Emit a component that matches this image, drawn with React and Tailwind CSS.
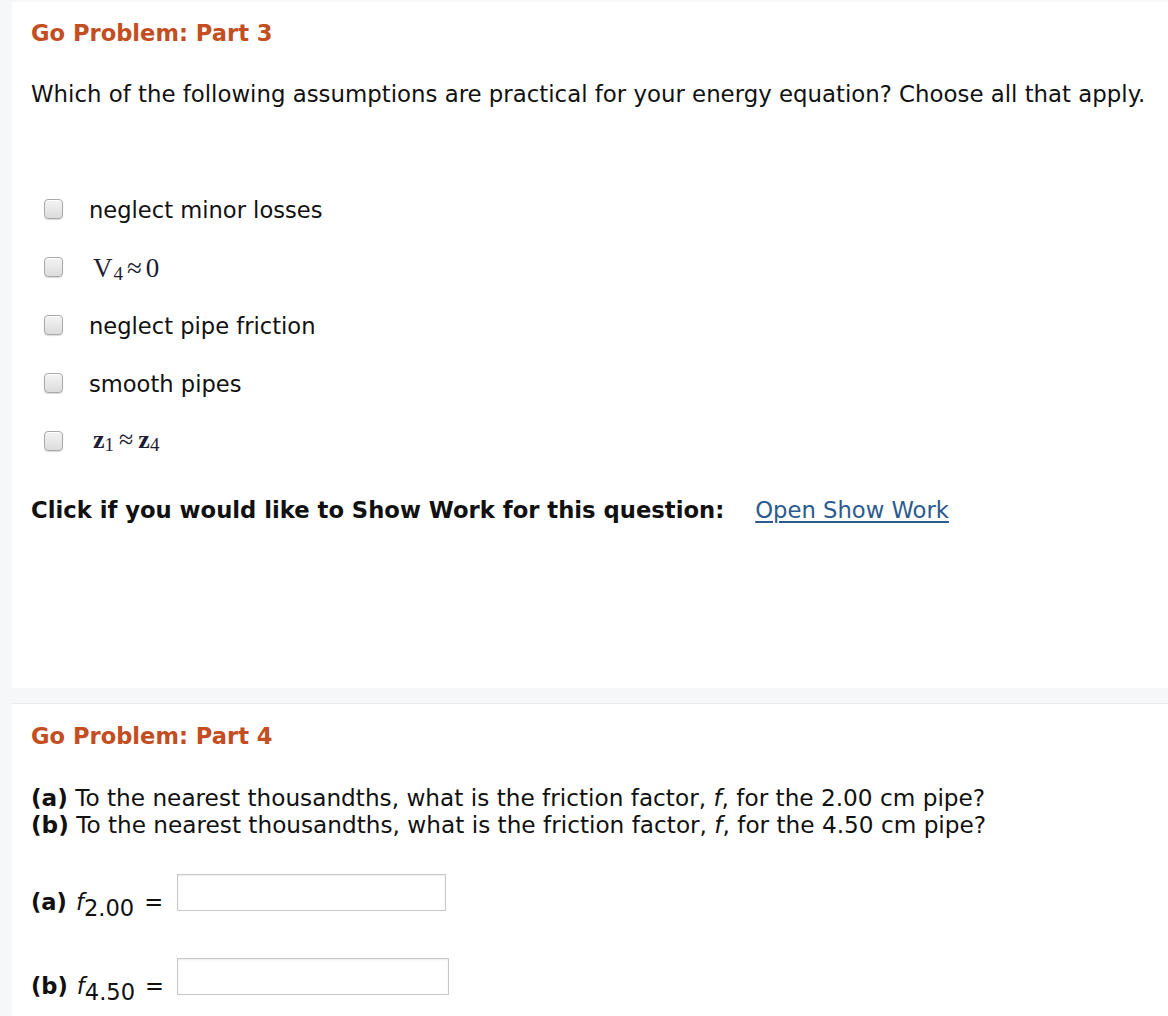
import React from "react";

function Box() {
  return (
    <span className="inline-block w-[19px] h-[20px] rounded-[4px] border border-[#a9a9a9] bg-gradient-to-b from-[#f4f4f4] to-[#dcdcdc] shadow-[inset_0_1px_0_#fff,0_1px_1px_rgba(0,0,0,0.15)]" />
  );
}

function Row({ children }) {
  return (
    <div className="flex items-center h-[58px]">
      <div className="w-[58px] pl-[13px] flex items-center">
        <Box />
      </div>
      <div className="flex items-center pt-[3px]">{children}</div>
    </div>
  );
}

const serif = { fontFamily: '"Liberation Serif", "Times New Roman", serif' };

export default function App() {
  const sans = { fontFamily: '"DejaVu Sans", Verdana, sans-serif' };
  return (
    <div className="min-h-[1016px] bg-[#f6f7f9] pl-3 pt-[2px] text-[#111]" style={sans}>
      <div className="bg-white h-[686px] pl-[19px] pt-[19px]">
        <div className="text-[22.6px] leading-[24px] font-bold text-[#c34e22]">Go Problem: Part 3</div>
        <div className="mt-[37px] text-[22.85px] leading-[24px]">
          Which of the following assumptions are practical for your energy equation? Choose all that apply.
        </div>
        <div className="mt-[74px]">
          <Row>
            <span className="text-[22.6px]">neglect minor losses</span>
          </Row>
          <Row>
            <span className="text-[27px] leading-none text-[#1d1d33] pl-[4px] flex items-baseline" style={serif}>
              V<span className="text-[19px] relative top-[3px] ml-[1px]">4</span>
              <span className="mx-[4px]">≈</span>0
            </span>
          </Row>
          <Row>
            <span className="text-[22.6px]">neglect pipe friction</span>
          </Row>
          <Row>
            <span className="text-[22.6px]">smooth pipes</span>
          </Row>
          <Row>
            <span className="text-[26px] leading-none font-bold text-[#1d1d33] pl-[4px] flex items-baseline relative -top-[3px]" style={serif}>
              z<span className="text-[19px] font-normal relative top-[3px]">1</span>
              <span className="font-normal mx-[5px]">≈</span>z<span className="text-[19px] font-normal relative top-[3px]">4</span>
            </span>
          </Row>
        </div>
        <div className="mt-[28px] flex items-center text-[22.7px] leading-[24px]">
          <span className="font-bold">Click if you would like to Show Work for this question:</span>
          <a className="ml-[31px] text-[#2b5b8e] underline underline-offset-[3px]">Open Show Work</a>
        </div>
      </div>
      <div className="h-[15px]" />
      <div className="bg-white border-t border-[#eaecee] min-h-[313px] pl-[19px] pt-[20px]">
        <div className="text-[22.6px] leading-[24px] font-bold text-[#c34e22]">Go Problem: Part 4</div>
        <div className="mt-[36px] text-[23.2px] leading-[27px]">
          <div>
            <b>(a)</b> To the nearest thousandths, what is the friction factor, <i>f</i>, for the 2.00 cm pipe?
          </div>
          <div>
            <b>(b)</b> To the nearest thousandths, what is the friction factor, <i>f</i>, for the 4.50 cm pipe?
          </div>
        </div>
        <div className="mt-[36px] flex items-center text-[22.6px]">
          <span className="w-[146px] flex items-center relative top-[10px]">
            <b>(a)</b>
            <i className="ml-[9px]">f</i>
            <span className="relative top-[6px]">2.00</span>
            <span className="ml-[10px]">=</span>
          </span>
          <span className="w-[269px] h-[37px] border border-[#c8c8c8] shadow-[inset_0_1px_2px_rgba(0,0,0,0.08)] bg-white" />
        </div>
        <div className="mt-[47px] flex items-center text-[22.6px]">
          <span className="w-[146px] flex items-center relative top-[10px]">
            <b>(b)</b>
            <i className="ml-[9px]">f</i>
            <span className="relative top-[6px]">4.50</span>
            <span className="ml-[10px]">=</span>
          </span>
          <span className="w-[272px] h-[37px] border border-[#c8c8c8] shadow-[inset_0_1px_2px_rgba(0,0,0,0.08)] bg-white" />
        </div>
      </div>
    </div>
  );
}
